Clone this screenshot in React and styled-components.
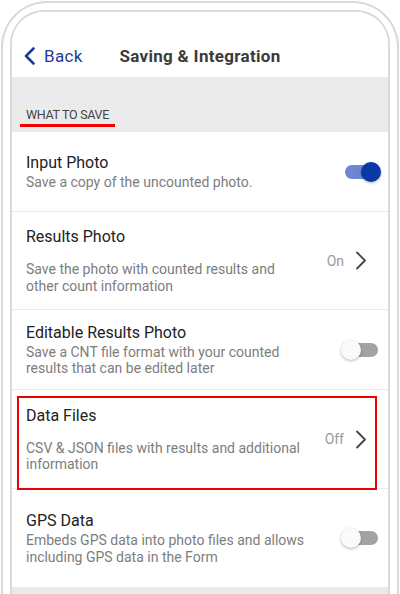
import React from 'react';
import styled, { createGlobalStyle } from 'styled-components';

const GlobalStyle = createGlobalStyle`
  html, body {
    margin: 0;
    padding: 0;
    background: #fff;
  }
  body {
    font-family: Roboto, "Liberation Sans", Arial, sans-serif;
    -webkit-font-smoothing: antialiased;
  }
  * {
    box-sizing: border-box;
  }
`;

const rows = [
  {
    title: 'Input Photo',
    text: 'Save a copy of the uncounted photo.',
    kind: 'toggle',
    on: true,
    height: 80,
  },
  {
    title: 'Results Photo',
    text: 'Save the photo with counted results and other count information',
    kind: 'link',
    value: 'On',
    height: 98,
  },
  {
    title: 'Editable Results Photo',
    text: 'Save a CNT file format with your counted results that can be edited later',
    kind: 'toggle',
    on: false,
    height: 80,
  },
  {
    title: 'Data Files',
    text: 'CSV & JSON files with results and additional information',
    kind: 'link',
    value: 'Off',
    height: 99,
    marked: true,
  },
  {
    title: 'GPS Data',
    text: 'Embeds GPS data into photo files and allows including GPS data in the Form',
    kind: 'toggle',
    on: false,
    height: 99,
  },
];

const App = () => {
  return (
    <>
      <GlobalStyle />
      <Frame>
        <Screen>
          <Header>
            <BackButton>
              <svg width="13" height="18" viewBox="0 0 13 18">
                <path
                  d="M10.5 1.5 L3 9 L10.5 16.5"
                  fill="none"
                  stroke="#1f3c9c"
                  strokeWidth="2.6"
                  strokeLinecap="round"
                  strokeLinejoin="round"
                />
              </svg>
              Back
            </BackButton>
            <HeaderTitle>Saving &amp; Integration</HeaderTitle>
            <span />
          </Header>

          <SectionHead>
            <SectionLabel>What to save</SectionLabel>
          </SectionHead>

          <List>
            {rows.map((row) => (
              <Row key={row.title} height={row.height}>
                <TextCol gap={row.kind === 'link' ? 14 : 1}>
                  <RowTitle>{row.title}</RowTitle>
                  <RowText>{row.text}</RowText>
                </TextCol>
                {row.kind === 'toggle' ? (
                  <Switch on={row.on}>
                    <Track on={row.on} />
                    <Thumb on={row.on} />
                  </Switch>
                ) : (
                  <LinkValue>
                    <ValueText>{row.value}</ValueText>
                    <svg width="12" height="19" viewBox="0 0 12 19">
                      <path
                        d="M2 1.5 L10 9.5 L2 17.5"
                        fill="none"
                        stroke="#454545"
                        strokeWidth="1.8"
                        strokeLinecap="round"
                        strokeLinejoin="round"
                      />
                    </svg>
                  </LinkValue>
                )}
                {row.marked && <Highlight />}
              </Row>
            ))}
          </List>
          <Footer />
        </Screen>
      </Frame>
    </>
  );
};

export default App;

const Frame = styled.div`
  margin: 1px 0 0 1px;
  width: 398px;
  height: 593px;
  padding: 7px 7px 0;
  border: 2px solid #d6dada;
  border-bottom: none;
  border-radius: 46px 46px 0 0;
  overflow: hidden;
`;

const Screen = styled.div`
  display: flex;
  flex-direction: column;
  height: 100%;
  border: 2px solid #d6dada;
  border-bottom: none;
  border-radius: 34px 34px 0 0;
  overflow: hidden;
  background: #fff;
`;

const Header = styled.header`
  display: grid;
  grid-template-columns: 1fr auto 1fr;
  align-items: center;
  height: 65px;
  padding-top: 22px;
  background: #fff;
`;

const BackButton = styled.div`
  display: flex;
  align-items: center;
  gap: 8px;
  padding-left: 11px;
  font-size: 17px;
  color: #1f3c9c;
  letter-spacing: 0.3px;
`;

const HeaderTitle = styled.div`
  font-size: 17px;
  font-weight: 700;
  color: #3b3b3b;
  letter-spacing: 0.3px;
`;

const SectionHead = styled.div`
  display: flex;
  align-items: flex-end;
  height: 55px;
  padding: 0 0 5px 8px;
  background: #ebebeb;
`;

const SectionLabel = styled.span`
  padding: 0 6px 1px;
  border-bottom: 3px solid #f00000;
  font-size: 12.5px;
  line-height: 16px;
  color: #444;
  text-transform: uppercase;
  letter-spacing: -0.3px;
`;

const List = styled.div`
  display: flex;
  flex-direction: column;
  background: #fff;
`;

const Row = styled.div`
  position: relative;
  display: flex;
  align-items: center;
  justify-content: space-between;
  height: ${(p) => p.height}px;
  padding: 0 7px 0 14px;
  border-bottom: 1px solid #e9e9e9;
`;

const TextCol = styled.div`
  display: flex;
  flex-direction: column;
  gap: ${(p) => p.gap}px;
  max-width: 284px;
`;

const RowTitle = styled.div`
  font-size: 16px;
  line-height: 20px;
  color: #222;
`;

const RowText = styled.div`
  font-size: 14px;
  line-height: 16.5px;
  color: #7d7d7d;
`;

const Switch = styled.div`
  position: relative;
  width: 40px;
  height: 20px;
  flex-shrink: 0;
`;

const Track = styled.div`
  position: absolute;
  top: 3px;
  left: 4px;
  right: 3px;
  height: 14px;
  border-radius: 7px;
  background: ${(p) => (p.on ? '#6d86d4' : '#a3a3a3')};
`;

const Thumb = styled.div`
  position: absolute;
  top: 0;
  ${(p) => (p.on ? 'right: 0;' : 'left: 0;')}
  width: 20px;
  height: 20px;
  border-radius: 50%;
  background: ${(p) => (p.on ? '#0b38a6' : '#fafafa')};
  box-shadow: 0 1px 3px rgba(0, 0, 0, 0.3);
`;

const LinkValue = styled.div`
  display: flex;
  align-items: center;
  gap: 11px;
  margin-right: 14px;
  flex-shrink: 0;
`;

const ValueText = styled.span`
  font-size: 14px;
  color: #9a9a9a;
`;

const Highlight = styled.div`
  position: absolute;
  top: 6px;
  left: 5px;
  right: 11px;
  bottom: -2px;
  border: 2.5px solid #ee0000;
  pointer-events: none;
  z-index: 1;
`;

const Footer = styled.div`
  flex: 1;
  background: #ebebeb;
`;
